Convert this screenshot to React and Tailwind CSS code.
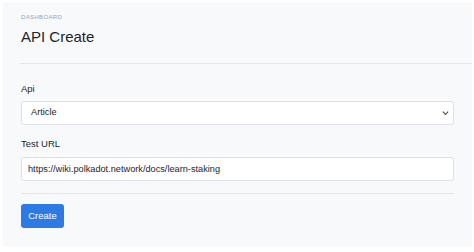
export default function App() {
  return (
    <div className="h-[252px] w-[474px] bg-white pt-[2px] pl-[3px] font-['Liberation_Sans',Arial,sans-serif] text-[#212529]">
      <div className="h-[245px] w-[469px] bg-[#f8f9fb]">
        <div className="pl-[18px] pt-[11px]">
          <div className="text-[6px] uppercase tracking-[0.06em] text-[#9aa3ad]">Dashboard</div>
          <h1 className="mt-[6px] text-[15px] leading-[18px] text-[#212529]">API Create</h1>
        </div>
        <div className="ml-[17px] mt-[17px] h-px bg-[#e3e6ea]" />
        <form className="pl-[18px] pr-[18px] pt-[19px]">
          <label className="block text-[9.5px] leading-[12px]">Api</label>
          <div className="relative mt-[6px]">
            <select className="block h-[24px] w-full appearance-none rounded-[3px] border border-[#dee2e6] bg-white pl-[9px] text-[9.2px] text-[#212529] outline-none">
              <option>Article</option>
            </select>
            <svg className="pointer-events-none absolute right-[5px] top-[9px] h-[6px] w-[7px]" viewBox="0 0 8 6" fill="none">
              <path d="M1 1.5l3 3 3-3" stroke="#555" strokeWidth="1.4" />
            </svg>
          </div>
          <label className="mt-[13px] block text-[9.5px] leading-[12px]">Test URL</label>
          <input
            className="mt-[7px] block h-[24px] w-full rounded-[3px] border border-[#dee2e6] bg-white pl-[6px] text-[9.2px] text-[#212529] outline-none"
            defaultValue="https://wiki.polkadot.network/docs/learn-staking"
          />
          <div className="mt-[12px] h-px bg-[#e3e6ea]" />
          <button
            type="button"
            className="mt-[10px] block h-[24px] w-[43px] rounded-[3px] bg-[#2c7be5] text-[9.5px] text-white"
          >
            Create
          </button>
        </form>
      </div>
    </div>
  );
}
